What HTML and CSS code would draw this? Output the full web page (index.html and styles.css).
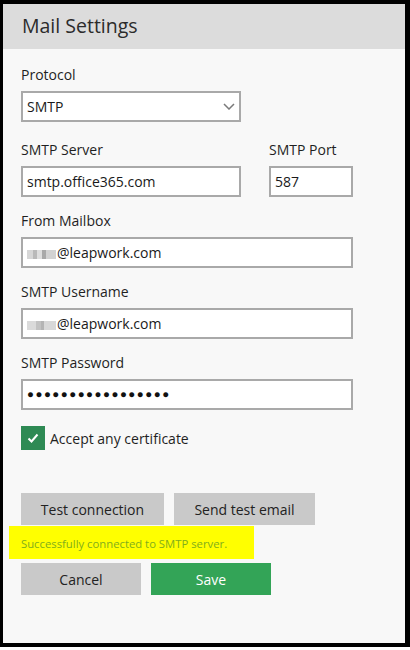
FILE: index.html
```html
<!DOCTYPE html>
<html lang="en">
<head>
    <meta charset="UTF-8">
    <meta name="viewport" content="width=device-width, initial-scale=1.0">
    <title>Mail Settings</title>
    <link rel="stylesheet" href="styles.css">
</head>
<body>
    <div class="panel">
        <div class="panel-header">
            <h1>Mail Settings</h1>
        </div>

        <div class="panel-body">
            <div class="group group-first">
                <div class="label">Protocol</div>
                <div class="field select">
                    <span>SMTP</span>
                    <svg class="chevron" width="12" height="7" viewBox="0 0 12 7">
                        <polyline points="1,1 6,6 11,1" fill="none" stroke="#7a7a7a" stroke-width="1.5"/>
                    </svg>
                </div>
            </div>

            <div class="row">
                <div class="group">
                    <div class="label">SMTP Server</div>
                    <div class="field field-server">smtp.office365.com</div>
                </div>
                <div class="group">
                    <div class="label">SMTP Port</div>
                    <div class="field field-port">587</div>
                </div>
            </div>

            <div class="group">
                <div class="label">From Mailbox</div>
                <div class="field field-wide"><span class="redacted"></span>@leapwork.com</div>
            </div>

            <div class="group">
                <div class="label">SMTP Username</div>
                <div class="field field-wide"><span class="redacted alt"></span>@leapwork.com</div>
            </div>

            <div class="group">
                <div class="label">SMTP Password</div>
                <div class="field field-wide password">&#9679;&#9679;&#9679;&#9679;&#9679;&#9679;&#9679;&#9679;&#9679;&#9679;&#9679;&#9679;&#9679;&#9679;&#9679;&#9679;&#9679;</div>
            </div>

            <label class="check-row">
                <span class="checkbox">
                    <svg width="12" height="10" viewBox="0 0 12 10">
                        <polyline points="1.5,5.5 4.5,8.5 10.5,1.5" fill="none" stroke="#fff" stroke-width="2"/>
                    </svg>
                </span>
                Accept any certificate
            </label>

            <div class="buttons test-buttons">
                <button class="btn btn-test">Test connection</button>
                <button class="btn btn-send">Send test email</button>
            </div>

            <div class="status">Successfully connected to SMTP server.</div>

            <div class="buttons actions">
                <button class="btn btn-action">Cancel</button>
                <button class="btn btn-action btn-save">Save</button>
            </div>
        </div>
    </div>
</body>
</html>
```

FILE: styles.css
```css
body {
    margin: 0;
    background-color: #ffffff;
    font-family: "Open Sans", "Noto Sans", sans-serif;
    color: #1f1f1f;
}

.panel {
    box-sizing: border-box;
    width: 410px;
    height: 647px;
    border-style: solid;
    border-color: #000000;
    border-width: 4px 5px 4px 3px;
    background-color: #f8f8f8;
}

.panel-header {
    height: 45px;
    padding-left: 19px;
    background-color: #dcdcdc;
}

.panel-header h1 {
    margin: 0;
    font-size: 19.5px;
    font-weight: 400;
    line-height: 43px;
    color: #2b2b2b;
}

.panel-body {
    padding: 16px 0 0 18px;
}

.label {
    font-size: 14px;
    line-height: 20px;
    margin-bottom: 6px;
}

.group {
    margin-top: 14px;
}

.group-first {
    margin-top: 0;
    margin-bottom: 4px;
}

.row {
    display: flex;
    gap: 28px;
}

.field {
    box-sizing: border-box;
    height: 31px;
    border: 2px solid #a9a9a9;
    background-color: #ffffff;
    padding: 0 4px;
    font-size: 14px;
    line-height: 27px;
    color: #1a1a1a;
    white-space: nowrap;
}

.select {
    width: 220px;
    display: flex;
    align-items: center;
    justify-content: space-between;
    padding-right: 4px;
}

.field-server {
    width: 220px;
}

.field-port {
    width: 84px;
}

.field-wide {
    width: 332px;
}

/* blurred address prefix */
.redacted {
    display: inline-block;
    width: 29px;
    height: 9px;
    margin-right: 1px;
    vertical-align: -1px;
    filter: blur(0.6px);
    background: linear-gradient(90deg, #d6d6d6 0 22%, #b9b9b9 22% 36%, #dedede 36% 52%, #a9a9a9 52% 64%, #d2d2d2 64% 100%);
}

.redacted.alt {
    background: linear-gradient(90deg, #dadada 0 30%, #c2c2c2 30% 48%, #b4b4b4 48% 60%, #d8d8d8 60% 100%);
}

.password {
    font-size: 11.5px;
    letter-spacing: 1.5px;
    color: #111111;
    line-height: 26px;
}

.check-row {
    display: flex;
    align-items: center;
    gap: 5px;
    margin-top: 16px;
    font-size: 14px;
}

.checkbox {
    width: 24px;
    height: 24px;
    background-color: #2e8a54;
    display: flex;
    align-items: center;
    justify-content: center;
}

.buttons {
    display: flex;
    gap: 10px;
}

.test-buttons {
    margin-top: 43px;
}

.btn {
    height: 32px;
    border: none;
    padding: 0;
    background-color: #c9c9c9;
    font-family: "Open Sans", "Noto Sans", sans-serif;
    font-size: 14px;
    color: #222222;
}

.btn-test {
    width: 143px;
}

.btn-send {
    width: 141px;
}

.status {
    box-sizing: border-box;
    width: 245px;
    height: 33px;
    margin: 1px 0 0 -12px;
    padding: 2px 0 0 12px;
    background-color: #ffff00;
    font-size: 11.3px;
    line-height: 31px;
    color: #7fae1c;
}

.actions {
    margin-top: 4px;
}

.btn-action {
    width: 120px;
}

.btn-save {
    background-color: #33a457;
    color: #ffffff;
}
```
